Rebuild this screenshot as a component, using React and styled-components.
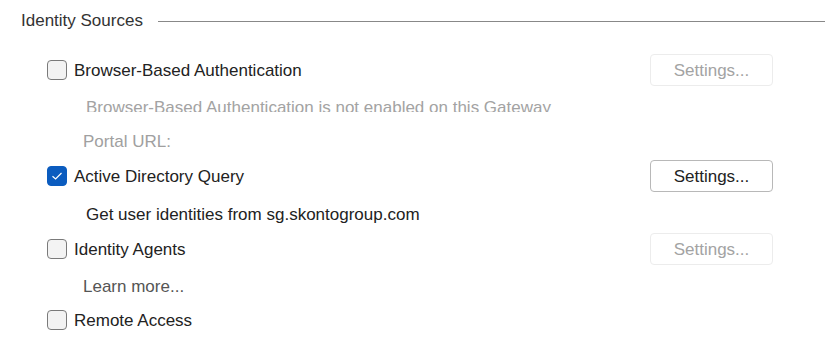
import React from "react";
import styled, { createGlobalStyle } from "styled-components";

const Global = createGlobalStyle`
  html, body { margin: 0; padding: 0; background: #fff; }
  body { font-family: "Liberation Sans", Arial, sans-serif; font-size: 17px; color: #222; }
`;

const Page = styled.div`
  width: 825px;
  height: 340px;
  overflow: hidden;
  background: #fff;
`;

const Header = styled.div`
  height: 40px;
  display: flex;
  align-items: center;
  padding-left: 21px;
  gap: 15px;
`;

const Title = styled.span`
  color: #333;
  line-height: 20px;
  white-space: nowrap;
  padding-top: 2px;
`;

const Rule = styled.div`
  flex: 1;
  height: 1px;
  background: #888;
  margin-top: 2px;
`;

const Section = styled.div`
  padding-left: 47px;
  padding-right: 52px;
  display: flex;
  flex-direction: column;
`;

const Row = styled.div`
  height: 32px;
  display: flex;
  align-items: center;
  margin-top: ${(p) => p.$mt}px;
`;

const Box = styled.span`
  width: 18px;
  height: 18px;
  border-radius: 4px;
  border: 1px solid ${(p) => (p.$checked ? "#0b5cbf" : "#7a7a7a")};
  background: ${(p) => (p.$checked ? "#0b5cbf" : "#f3f3f3")};
  display: flex;
  align-items: center;
  justify-content: center;
  flex: none;
`;

const Label = styled.span`
  margin-left: 7px;
  flex: 1;
  color: #222;
  line-height: 20px;
  padding-top: 2px;
`;

const Button = styled.button`
  width: 123px;
  height: 32px;
  border-radius: 4px;
  background: #fff;
  font-family: inherit;
  font-size: 17px;
  border: 1px solid ${(p) => (p.disabled ? "#ececec" : "#b8b8b8")};
  color: ${(p) => (p.disabled ? "#a3a3a3" : "#222")};
  padding: 2px 0 0;
`;

const ClippedNote = styled.div`
  height: 26px;
  overflow: hidden;
  padding-left: 39px;
`;

const NoteText = styled.div`
  margin-top: 12px;
  line-height: 20px;
  color: #a3a3a3;
  white-space: nowrap;
`;

const Sub = styled.div`
  line-height: 20px;
  margin-top: ${(p) => p.$mt}px;
  padding-left: ${(p) => p.$pl}px;
  color: ${(p) => p.$color};
  white-space: nowrap;
`;

const Check = () => (
  <svg width="12" height="10" viewBox="0 0 12 10">
    <polyline points="1.5,5.2 4.6,8 10.5,2" fill="none" stroke="#fff" strokeWidth="1.2" />
  </svg>
);

const Source = ({ label, checked, button, mt }) => (
  <Row $mt={mt}>
    <Box $checked={checked}>{checked && <Check />}</Box>
    <Label>{label}</Label>
    {button && <Button disabled={button === "disabled"}>Settings...</Button>}
  </Row>
);

export default function App() {
  return (
    <Page>
      <Global />
      <Header>
        <Title>Identity Sources</Title>
        <Rule />
      </Header>
      <Section>
        <Source label="Browser-Based Authentication" button="disabled" mt={14} />
        <ClippedNote>
          <NoteText>Browser-Based Authentication is not enabled on this Gateway</NoteText>
        </ClippedNote>
        <Sub $mt={20} $pl={36} $color="#a0a0a0">Portal URL:</Sub>
        <Source label="Active Directory Query" checked button="enabled" mt={8} />
        <Sub $mt={13} $pl={39} $color="#222">Get user identities from sg.skontogroup.com</Sub>
        <Source label="Identity Agents" button="disabled" mt={8} />
        <Sub $mt={12} $pl={36} $color="#555">Learn more...</Sub>
        <Source label="Remote Access" mt={7} />
      </Section>
    </Page>
  );
}
